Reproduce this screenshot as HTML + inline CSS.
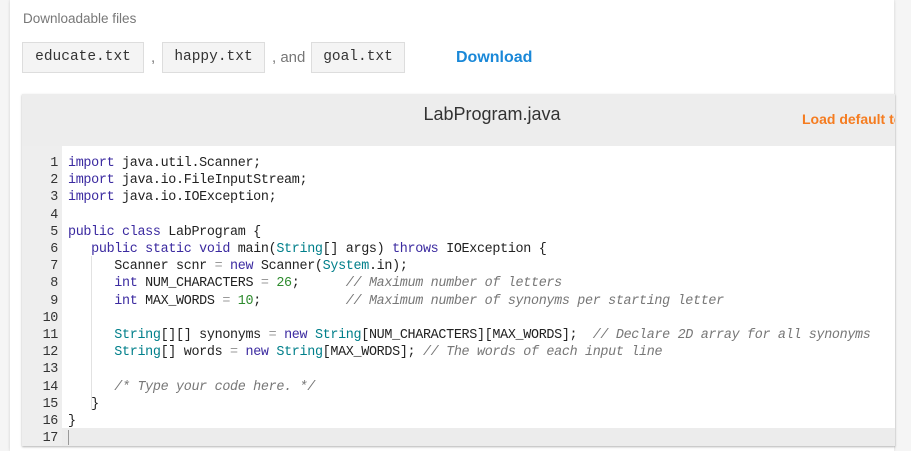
<!DOCTYPE html>
<html><head><style>
body{margin:0;width:911px;height:451px;overflow:hidden;background:#f5f5f5;font-family:"Liberation Sans",sans-serif;position:relative}
.panel{position:absolute;left:10px;top:0;width:884px;height:451px;background:#fff;box-shadow:0 0 3px rgba(0,0,0,.15)}
.lbl{position:absolute;left:23px;top:11px;font-size:13.5px;color:#777}
.f{position:absolute;top:42px;height:31px;background:#f4f4f4;border:1px solid #ddd;box-sizing:border-box;font-family:"Liberation Mono",monospace;font-size:14.5px;color:#333;line-height:29px;text-align:center}
.sep{position:absolute;top:49px;font-size:15px;color:#777}
.dl{position:absolute;left:456px;top:49px;font-size:16px;font-weight:bold;color:#1a88d8}
.ed{position:absolute;left:22px;top:94px;width:873px;height:352px;background:#fff;box-shadow:0 1px 2px rgba(0,0,0,.3);overflow:hidden}
.hd{height:52px;background:#ededed;position:relative}
.hd .t{position:absolute;left:0;width:940px;text-align:center;top:10px;font-size:18px;color:#333}
.hd .l{position:absolute;left:780px;top:17px;font-size:14px;font-weight:bold;color:#f57c20;white-space:nowrap}
.gut{position:absolute;left:0;top:52px;width:40px;height:300px;background:#eee}
pre{position:absolute;left:0;top:61px;margin:0;font-family:"Liberation Mono",monospace;font-size:13.4px;line-height:17.2px;color:#222;letter-spacing:-0.32px}
.n{display:inline-block;width:36px;text-align:right;color:#333;margin-right:10px}
.k{color:#3b2aa0}.ty{color:#007f8a}.nu{color:#2e8b2e}.c{color:#777;font-style:italic}.o{color:#999}
.act{position:absolute;left:40px;top:334px;width:833px;height:18px;background:#ececec}
.cur{position:absolute;left:46px;top:336px;width:1px;height:15px;background:#999}
.ind{position:absolute;width:1px;background:#e2e2e2}
</style></head><body>
<div class="panel"></div>
<div class="lbl">Downloadable files</div>
<div class="f" style="left:22px;width:122px">educate.txt</div>
<span class="sep" style="left:151px">,</span>
<div class="f" style="left:162px;width:103px">happy.txt</div>
<span class="sep" style="left:272px">, and</span>
<div class="f" style="left:311px;width:94px">goal.txt</div>
<div class="dl">Download</div>
<div class="ed">
<div class="hd"><div class="t">LabProgram.java</div><div class="l">Load default template...</div></div>
<div class="gut"></div>
<div class="act"></div><div class="cur"></div>
<div class="ind" style="left:69px;top:162px;height:154px"></div>
<pre><span class="n">1</span><span class="k">import</span> java.util.Scanner;
<span class="n">2</span><span class="k">import</span> java.io.FileInputStream;
<span class="n">3</span><span class="k">import</span> java.io.IOException;
<span class="n">4</span>
<span class="n">5</span><span class="k">public class</span> LabProgram {
<span class="n">6</span>   <span class="k">public static void</span> main(<span class="ty">String</span>[] args) <span class="k">throws</span> IOException {
<span class="n">7</span>      Scanner scnr <span class="o">=</span> <span class="k">new</span> Scanner(<span class="ty">System</span>.in);
<span class="n">8</span>      <span class="k">int</span> NUM_CHARACTERS <span class="o">=</span> <span class="nu">26</span>;      <span class="c">// Maximum number of letters</span>
<span class="n">9</span>      <span class="k">int</span> MAX_WORDS <span class="o">=</span> <span class="nu">10</span>;           <span class="c">// Maximum number of synonyms per starting letter</span>
<span class="n">10</span>
<span class="n">11</span>      <span class="ty">String</span>[][] synonyms <span class="o">=</span> <span class="k">new</span> <span class="ty">String</span>[NUM_CHARACTERS][MAX_WORDS];  <span class="c">// Declare 2D array for all synonyms</span>
<span class="n">12</span>      <span class="ty">String</span>[] words <span class="o">=</span> <span class="k">new</span> <span class="ty">String</span>[MAX_WORDS]; <span class="c">// The words of each input line</span>
<span class="n">13</span>
<span class="n">14</span>      <span class="c">/* Type your code here. */</span>
<span class="n">15</span>   }
<span class="n">16</span>}
<span class="n">17</span></pre>
</div>
</body></html>
